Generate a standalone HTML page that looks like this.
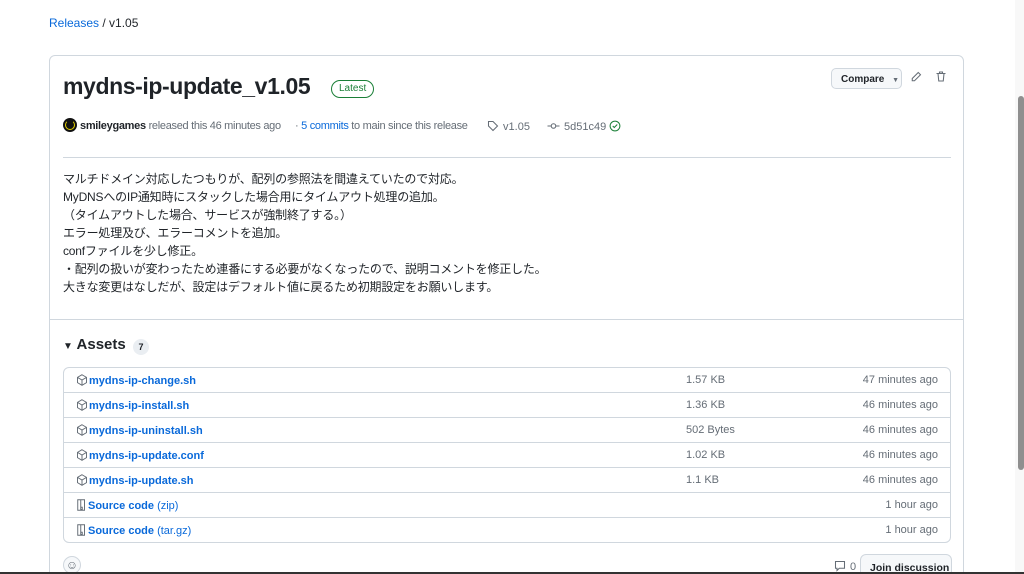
<!DOCTYPE html>
<html><head><meta charset="utf-8"><style>
*{box-sizing:border-box;margin:0;padding:0}
html,body{width:1024px;height:574px;overflow:hidden}
body{background:#fff;font-family:"Liberation Sans","Noto Sans CJK JP",sans-serif;color:#1f2328;position:relative}
.a{color:#0969da}
.crumb{position:absolute;left:49px;top:16px;font-size:12px;color:#1f2328}
.card{position:absolute;left:49px;top:55px;width:915px;height:540px;border:1px solid #d0d7de;border-radius:6px}
.title{position:absolute;left:13px;top:17px;font-size:23px;font-weight:600;letter-spacing:-0.4px;white-space:nowrap}
.latest{position:absolute;left:281px;top:24px;border:1px solid #1a7f37;color:#1a7f37;border-radius:12px;font-size:10px;padding:3px 7px;line-height:10px}
.m{position:absolute;top:64px;font-size:11px;color:#656d76;white-space:nowrap}
.sep{position:absolute;left:13px;width:888px;top:101px;border-top:1px solid #d0d7de}
.body{position:absolute;left:13px;top:114px;font-size:12px;line-height:18px;letter-spacing:-0.2px}
.sep2{position:absolute;left:0;width:913px;top:263px;border-top:1px solid #d0d7de}
.assets{position:absolute;left:13px;top:280px;font-size:15px;font-weight:600}
.cnt{position:absolute;left:83px;top:283px;width:16px;height:16px;border-radius:8px;background:#eaeef2;font-size:9px;text-align:center;line-height:16px;font-weight:600}
.tbl{position:absolute;left:13px;top:311px;width:888px;border:1px solid #d0d7de;border-radius:6px}
.row{height:25px;border-top:1px solid #d0d7de;position:relative;font-size:11px;white-space:nowrap}
.row:first-child{border-top:none;height:24px}
.row .n{position:absolute;left:12px;top:6px;color:#0969da;font-weight:600}
.row .s{position:absolute;left:622px;top:6px;color:#656d76}
.row .t{position:absolute;right:12px;top:6px;color:#656d76}
.ic{display:inline-block;vertical-align:-2px;margin-right:1px}
.btn{position:absolute;left:781px;top:12px;width:71px;height:21px;border:1px solid #d0d7de;border-radius:5px;background:#f6f8fa;font-size:10px;font-weight:600;padding:5px 0 0 9px;white-space:nowrap}
.sb{position:absolute;right:0;top:0;width:9px;height:572px;background:#f8f8f8}
.th{position:absolute;left:3px;top:96px;width:6px;height:374px;background:#8f8f8f;border-radius:3px}
</style></head><body>
<div class="crumb"><span class="a">Releases</span> / v1.05</div>
<div class="card">
<div class="title">mydns-ip-update_v1.05</div>
<div class="latest">Latest</div>
<div class="btn">Compare <span style="font-size:7px;margin-left:5px;color:#656d76">▼</span></div>
<svg style="position:absolute;left:860px;top:15px" width="12" height="12" viewBox="0 0 16 16"><path d="M11 2l3 3-8 8H3v-3z" fill="none" stroke="#656d76" stroke-width="1.4"/></svg>
<svg style="position:absolute;left:885px;top:14px" width="12" height="13" viewBox="0 0 16 16"><path d="M2 4h12M6 4V2h4v2M4 4l1 10h6l1-10" fill="none" stroke="#656d76" stroke-width="1.4"/></svg>
<div style="position:absolute;left:13px;top:62px;width:14px;height:14px;border-radius:7px;background:#111"><div style="position:absolute;left:2px;top:2px;width:10px;height:10px;border-radius:5px;border:1.5px solid #e5d200;border-top-color:transparent"></div></div>
<div class="m" style="left:30px;letter-spacing:-0.3px"><b style="color:#1f2328;font-weight:600">smileygames</b> released this 46 minutes ago</div>
<div class="m" style="left:245px;letter-spacing:-0.3px">· <span class="a">5 commits</span> to main since this release</div>
<div class="m" style="left:437px"><svg class="ic" width="12" height="12" viewBox="0 0 16 16"><path d="M2 2h6l6 6-6 6-6-6z" fill="none" stroke="#656d76" stroke-width="1.4"/></svg> v1.05</div>
<div class="m" style="left:497px"><svg class="ic" width="13" height="12" viewBox="0 0 16 16"><circle cx="8" cy="8" r="3" fill="none" stroke="#656d76" stroke-width="1.4"/><path d="M0 8h5M11 8h5" stroke="#656d76" stroke-width="1.4"/></svg> 5d51c49 <svg class="ic" width="12" height="12" viewBox="0 0 16 16"><circle cx="8" cy="8" r="6.5" fill="none" stroke="#1a7f37" stroke-width="1.4"/><path d="M5 8l2 2 4-4" fill="none" stroke="#1a7f37" stroke-width="1.4"/></svg></div>
<div class="sep"></div>
<div class="body">マルチドメイン対応したつもりが、配列の参照法を間違えていたので対応。<br>MyDNSへのIP通知時にスタックした場合用にタイムアウト処理の追加。<br>（タイムアウトした場合、サービスが強制終了する。）<br>エラー処理及び、エラーコメントを追加。<br>confファイルを少し修正。<br>・配列の扱いが変わったため連番にする必要がなくなったので、説明コメントを修正した。<br>大きな変更はなしだが、設定はデフォルト値に戻るため初期設定をお願いします。</div>
<div class="sep2"></div>
<div class="assets"><span style="font-size:10px">▼</span> Assets</div>
<div class="cnt">7</div>
<div class="tbl">
<div class="row"><span class="n"><svg class="ic" width="12" height="12" viewBox="0 0 16 16"><path d="M8 1l6 3.5v7L8 15l-6-3.5v-7zM2 4.5L8 8l6-3.5M8 8v7" fill="none" stroke="#656d76" stroke-width="1.3"/></svg>mydns-ip-change.sh</span><span class="s">1.57 KB</span><span class="t">47 minutes ago</span></div>
<div class="row"><span class="n"><svg class="ic" width="12" height="12" viewBox="0 0 16 16"><path d="M8 1l6 3.5v7L8 15l-6-3.5v-7zM2 4.5L8 8l6-3.5M8 8v7" fill="none" stroke="#656d76" stroke-width="1.3"/></svg>mydns-ip-install.sh</span><span class="s">1.36 KB</span><span class="t">46 minutes ago</span></div>
<div class="row"><span class="n"><svg class="ic" width="12" height="12" viewBox="0 0 16 16"><path d="M8 1l6 3.5v7L8 15l-6-3.5v-7zM2 4.5L8 8l6-3.5M8 8v7" fill="none" stroke="#656d76" stroke-width="1.3"/></svg>mydns-ip-uninstall.sh</span><span class="s">502 Bytes</span><span class="t">46 minutes ago</span></div>
<div class="row"><span class="n"><svg class="ic" width="12" height="12" viewBox="0 0 16 16"><path d="M8 1l6 3.5v7L8 15l-6-3.5v-7zM2 4.5L8 8l6-3.5M8 8v7" fill="none" stroke="#656d76" stroke-width="1.3"/></svg>mydns-ip-update.conf</span><span class="s">1.02 KB</span><span class="t">46 minutes ago</span></div>
<div class="row"><span class="n"><svg class="ic" width="12" height="12" viewBox="0 0 16 16"><path d="M8 1l6 3.5v7L8 15l-6-3.5v-7zM2 4.5L8 8l6-3.5M8 8v7" fill="none" stroke="#656d76" stroke-width="1.3"/></svg>mydns-ip-update.sh</span><span class="s">1.1 KB</span><span class="t">46 minutes ago</span></div>
<div class="row"><span class="n"><svg class="ic" width="11" height="12" viewBox="0 0 14 16"><path d="M2 1h9v14H2zM6 1v10M6 11h2v3H6z" fill="none" stroke="#656d76" stroke-width="1.3"/></svg>Source code <span style="font-weight:400">(zip)</span></span><span class="t">1 hour ago</span></div>
<div class="row"><span class="n"><svg class="ic" width="11" height="12" viewBox="0 0 14 16"><path d="M2 1h9v14H2zM6 1v10M6 11h2v3H6z" fill="none" stroke="#656d76" stroke-width="1.3"/></svg>Source code <span style="font-weight:400">(tar.gz)</span></span><span class="t">1 hour ago</span></div>
</div>
<div style="position:absolute;left:13px;top:500px;width:18px;height:18px;border:1px solid #d0d7de;border-radius:9px;background:#f6f8fa;font-size:12px;text-align:center;line-height:16px;color:#656d76">☺</div>
<div style="position:absolute;left:784px;top:504px;font-size:11px;color:#656d76;white-space:nowrap"><svg class="ic" width="12" height="12" viewBox="0 0 16 16"><path d="M2 2h12v9H7l-3 3v-3H2z" fill="none" stroke="#656d76" stroke-width="1.4"/></svg> 0</div>
<div style="position:absolute;left:810px;top:498px;width:92px;height:26px;border:1px solid #d0d7de;border-radius:6px;background:#f6f8fa;font-size:10.5px;font-weight:600;padding:7px 0 0 9px;white-space:nowrap">Join discussion</div>
</div>
<div class="sb"><div class="th"></div></div>
<div style="position:absolute;left:0;top:572px;width:1024px;height:2px;background:#333"></div>
</body></html>
